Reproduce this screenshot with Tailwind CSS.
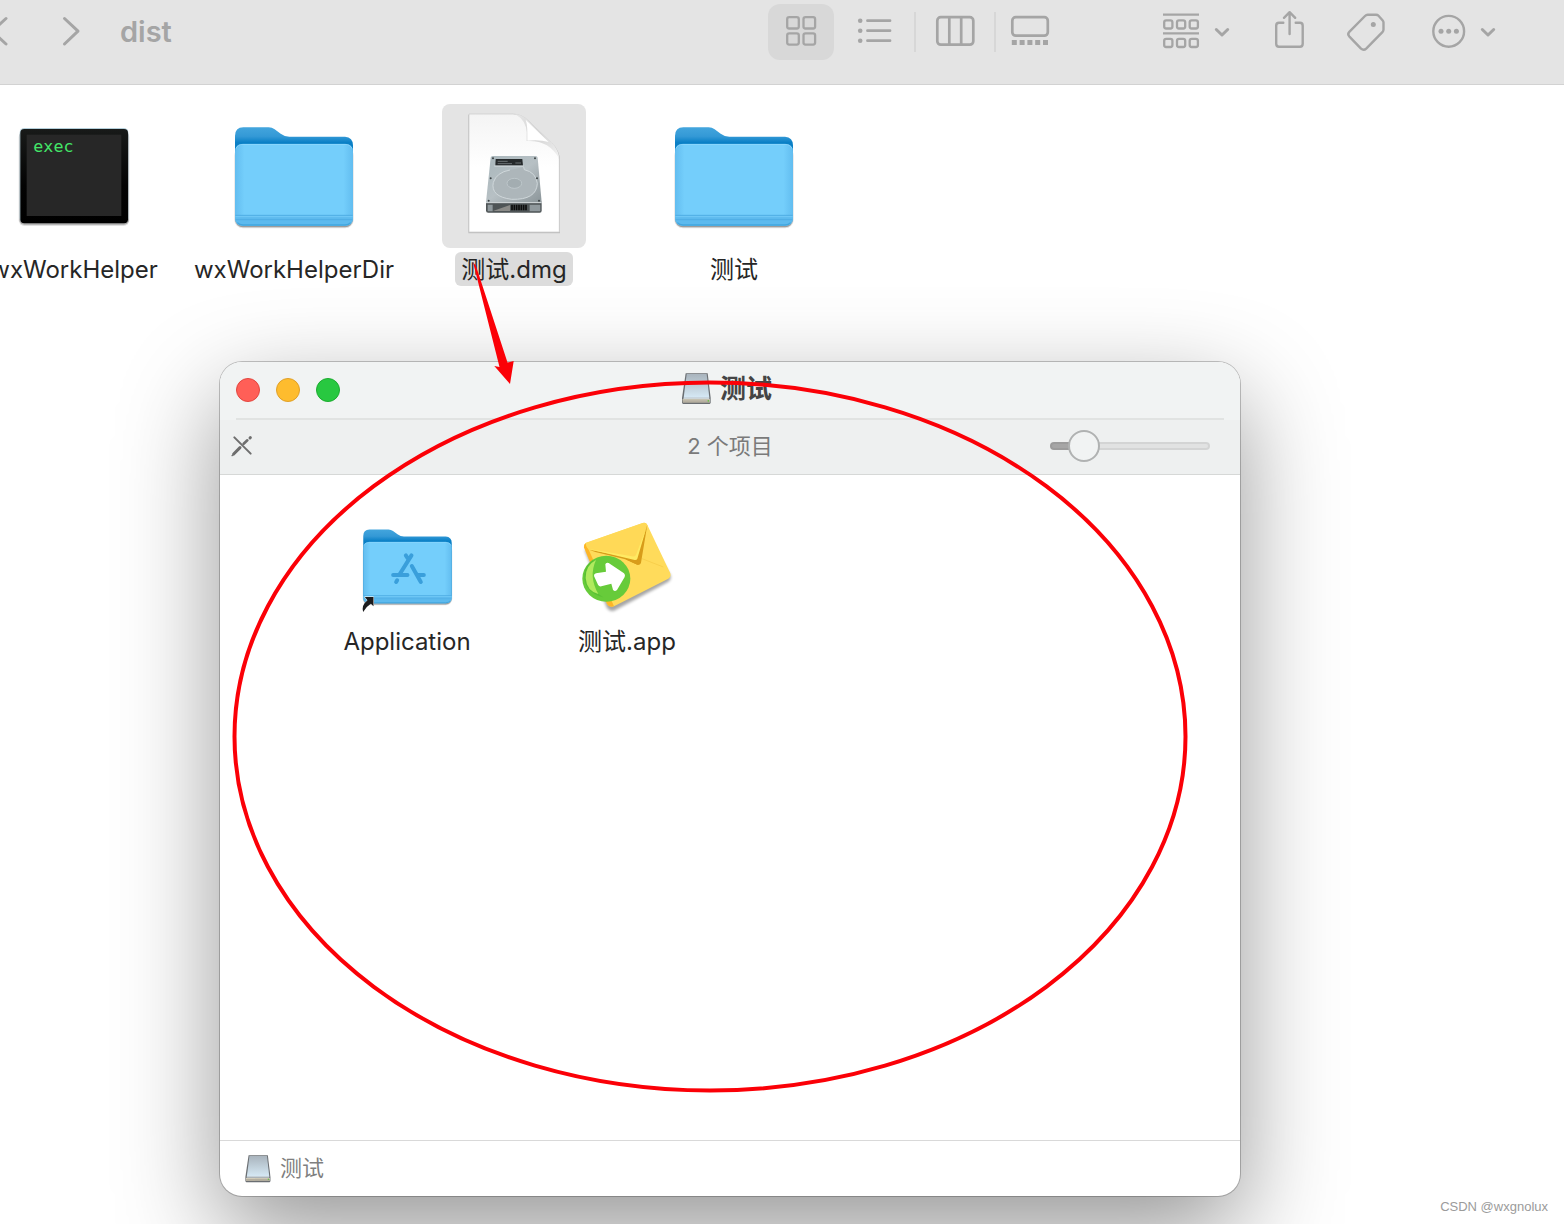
<!DOCTYPE html>
<html lang="zh-CN">
<head>
<meta charset="utf-8">
<meta name="viewport" content="width=device-width, initial-scale=1">
<title>dist</title>
<script src="https://cdn.jsdelivr.net/npm/@tailwindcss/browser@4"></script>
</head>
<body class="relative min-h-screen overflow-hidden bg-white font-['Inter','Noto_Sans_CJK_SC',sans-serif] text-[#262626]">

<!-- Shared artwork -->
<svg class="absolute size-0" aria-hidden="true">
  <defs>
    <linearGradient id="folderBack" x1="0" y1="0" x2="0" y2="1">
      <stop offset="0" stop-color="#43a5dd"/><stop offset=".1" stop-color="#3499d6"/><stop offset=".17" stop-color="#0a80c6"/><stop offset="1" stop-color="#0a80c6"/>
    </linearGradient>
    <linearGradient id="folderFront" x1="0" y1="0" x2="1" y2="0">
      <stop offset="0" stop-color="#62bdf0"/><stop offset=".08" stop-color="#74cefb"/><stop offset=".92" stop-color="#74cefb"/><stop offset="1" stop-color="#62bdf0"/>
    </linearGradient>
    <linearGradient id="diskTop" x1="0" y1="0" x2="0" y2="1">
      <stop offset="0" stop-color="#a9b4bd"/><stop offset="1" stop-color="#d6e9f5"/>
    </linearGradient>
  </defs>
  <symbol id="folder" viewBox="126 12 432 432">
    <rect x="163" y="142" width="358" height="243" rx="26" fill="#000" opacity=".12"/>
    <rect x="165" y="150" width="354" height="232" rx="24" fill="#000" opacity=".3"/>
    <path d="M165 108Q165 82 190 82H266Q276 82 284 88L302 101Q314 110 328 110H495Q519 112 519 136V350H165Z" fill="url(#folderBack)"/>
    <path d="M165 156Q165 132 189 132H495Q519 132 519 156V353Q519 377 495 377H189Q165 377 165 353Z" fill="url(#folderFront)"/>
    <path d="M168 146Q172 133 189 133H495Q512 133 516 146" fill="none" stroke="#9addff" stroke-width="2"/>
    <path d="M165 347H519V352Q519 377 495 377H189Q165 377 165 352Z" fill="#5dbaee"/>
    <path d="M166 346H518M167 359H517" stroke="#50aee4" stroke-width="3"/>
    <path d="M166 350H518" stroke="#73caf7" stroke-width="3"/>
    <path d="M172 368Q178 375 189 375H495Q506 375 512 368" fill="none" stroke="#43a6de" stroke-width="4"/>
  </symbol>
  <symbol id="disk" viewBox="66 52 90 96">
    <path d="M77 53H143L152 127V142L149 145H69L66 142V127Z" fill="#6a6e72"/>
    <path d="M80 55H140L148 126H71Z" fill="url(#diskTop)"/>
    <path d="M71 126H148V129H70Z" fill="#eef8fd"/>
    <path d="M68 131H150V141H68Z" fill="#b5afa0"/>
    <path d="M68 131H150V134H68Z" fill="#d2ccba"/>
    <rect x="143" y="133" width="4" height="5" fill="#6bc24a"/>
  </symbol>
  <symbol id="chevron" viewBox="0 0 16 44">
    <path d="M2.300 19.500L8 25L13.700 19.500" fill="none" stroke="currentColor" stroke-width="3" stroke-linecap="round" stroke-linejoin="round"/>
  </symbol>
</svg>

<header class="flex h-[85px] items-start border-b border-[#d2d2d2] bg-[#e4e4e4] pt-1 pr-17 text-[#a5a5a5]">
  <nav class="-ml-2.5 flex h-14 items-center gap-[52px]">
    <button aria-label="后退"><svg class="block h-11 w-5" viewBox="0 0 20 44" fill="none" stroke="currentColor" stroke-width="3" stroke-linecap="round" stroke-linejoin="round"><path d="M16 8.500L2 21.200L16 34"/></svg></button>
    <button aria-label="前进"><svg class="block h-11 w-5" viewBox="0 0 20 44" fill="none" stroke="currentColor" stroke-width="3" stroke-linecap="round" stroke-linejoin="round"><path d="M2.500 8.500L16 21.200L2.500 34"/></svg></button>
  </nav>
  <h1 class="ml-[38px] flex h-14 items-center text-[29px] font-semibold">dist</h1>

  <div class="ml-auto flex h-14 items-center gap-[7px]">
    <button aria-label="图标" class="flex h-14 w-[66px] items-center rounded-xl bg-[#d8d8d8]">
      <svg class="h-11 w-full" viewBox="0 0 66 44" fill="none" stroke="currentColor" stroke-width="2.300"><rect x="19.200" y="7.200" width="11.600" height="11.300" rx="2"/><rect x="35.500" y="7.200" width="11.600" height="11.300" rx="2"/><rect x="19.200" y="23.300" width="11.600" height="11.300" rx="2"/><rect x="35.500" y="23.300" width="11.600" height="11.300" rx="2"/></svg>
    </button>
    <button aria-label="列表" class="w-[66px]">
      <svg class="block h-11 w-full" viewBox="0 0 66 44" fill="currentColor"><circle cx="19.200" cy="10.700" r="2.300"/><circle cx="19.200" cy="20.700" r="2.300"/><circle cx="19.200" cy="30.700" r="2.300"/><path d="M26.500 10.700H49M26.500 20.700H49M26.500 30.700H49" stroke="currentColor" stroke-width="2.800" stroke-linecap="round"/></svg>
    </button>
    <span class="h-10 w-0.5 bg-[#d7d7d7]"></span>
    <button aria-label="分栏" class="w-16">
      <svg class="block h-11 w-full" viewBox="0 0 64 44" fill="none" stroke="currentColor" stroke-width="2.700"><rect x="14.300" y="7.200" width="36" height="27.500" rx="3.500"/><path d="M26.300 7V35M38.200 7V35"/></svg>
    </button>
    <span class="h-10 w-0.5 bg-[#d7d7d7]"></span>
    <button aria-label="画廊" class="w-[54px]">
      <svg class="block h-11 w-full" viewBox="0 0 54 44" fill="currentColor"><rect x="9.300" y="7.200" width="35.500" height="18.500" rx="3.500" fill="none" stroke="currentColor" stroke-width="2.700"/><rect x="8.800" y="30" width="5" height="5"/><rect x="16.600" y="30" width="5" height="5"/><rect x="24.400" y="30" width="5" height="5"/><rect x="32.200" y="30" width="5" height="5"/><rect x="40" y="30" width="5" height="5"/></svg>
    </button>
  </div>

  <div class="ml-[105px] flex h-14 items-center gap-11">
    <button aria-label="分组" class="flex items-center gap-3.5">
      <svg class="h-11 w-[38px]" viewBox="0 0 38 44" fill="none" stroke="currentColor" stroke-width="2.300"><path d="M1 4.700H37M1 23.400H37"/><rect x="2.200" y="10.300" width="8.200" height="8.200" rx="2"/><rect x="15" y="10.300" width="8.200" height="8.200" rx="2"/><rect x="27.700" y="10.300" width="8.200" height="8.200" rx="2"/><rect x="2.200" y="28.800" width="8.200" height="8.200" rx="2"/><rect x="15" y="28.800" width="8.200" height="8.200" rx="2"/><rect x="27.700" y="28.800" width="8.200" height="8.200" rx="2"/></svg>
      <svg class="h-11 w-4"><use href="#chevron"/></svg>
    </button>
    <button aria-label="共享">
      <svg class="block h-11 w-[30px]" viewBox="0 0 30 44" fill="none" stroke="currentColor" stroke-width="2.400" stroke-linecap="round" stroke-linejoin="round"><path d="M9.300 12.800H5Q2.200 12.800 2.200 15.800V33.800Q2.200 36.800 5 36.800H26Q28.700 36.800 28.700 33.800V15.800Q28.700 12.800 26 12.800H21.700M15.600 24V2.500M10 7.800L15.600 2.200L21.200 7.800"/></svg>
    </button>
    <button aria-label="标签">
      <svg class="block h-11 w-10 overflow-visible" viewBox="0 0 40 44" fill="none" stroke="currentColor" stroke-width="2.400" stroke-linejoin="round"><path d="M19.700 4.700H28Q29.500 4.700 30.500 5.800L34.500 10.200Q35.500 11.300 35.500 12.500V19.500Q35.500 21 34.400 22.200L18.200 38.700Q15.700 41 13 38.700L1.200 26.300Q-.8 24 1.300 21.900L17 6Q18.300 4.700 19.700 4.700Z"/><circle cx="25.300" cy="14.400" r="2.500" fill="currentColor" stroke="none"/></svg>
    </button>
    <button aria-label="更多" class="flex items-center gap-3.5">
      <svg class="h-11 w-[34px]" viewBox="0 0 34 44" fill="currentColor"><circle cx="16.700" cy="21.300" r="15.400" fill="none" stroke="currentColor" stroke-width="2.400"/><circle cx="9" cy="21.300" r="2.500"/><circle cx="16.700" cy="21.300" r="2.500"/><circle cx="24.400" cy="21.300" r="2.500"/></svg>
      <svg class="h-11 w-4"><use href="#chevron"/></svg>
    </button>
  </div>
</header>

<main>
  <ul class="-ml-9 flex pt-[19px] text-2xl">
    <li class="flex w-[220px] shrink-0 flex-col items-center gap-1">
      <svg class="size-36" viewBox="6 12 432 432">
        <defs><linearGradient id="bezel" x1="0" y1="0" x2="0" y2="1"><stop offset="0" stop-color="#181a19"/><stop offset=".6" stop-color="#030303"/><stop offset="1" stop-color="#000"/></linearGradient></defs>
        <rect x="56" y="94" width="332" height="284" rx="17" fill="#000" opacity=".12"/>
        <rect x="58" y="92" width="329" height="282" rx="15" fill="#000" opacity=".25"/>
        <rect x="59" y="84" width="326" height="284" rx="14" fill="#b4cfda"/>
        <rect x="61" y="87" width="323" height="283" rx="12" fill="url(#bezel)"/>
        <rect x="80" y="104" width="284" height="244" fill="#272727"/>
        <text x="100" y="157" font-family="DejaVu Sans Mono, monospace" font-size="50" fill="#43e668">exec</text>
      </svg>
      <span class="rounded-md px-1.5 pt-0.5 leading-8">wxWorkHelper</span>
    </li>
    <li class="flex w-[220px] shrink-0 flex-col items-center gap-1">
      <svg class="size-36"><use href="#folder"/></svg>
      <span class="rounded-md px-1.5 pt-0.5 leading-8">wxWorkHelperDir</span>
    </li>
    <li class="flex w-[220px] shrink-0 flex-col items-center gap-1">
      <svg class="size-36 rounded-lg bg-[#e4e4e4]" viewBox="36 27 432 432">
        <defs>
          <linearGradient id="paper" x1="0" y1="0" x2="0" y2="1"><stop offset="0" stop-color="#f4f4f4"/><stop offset=".45" stop-color="#fff"/></linearGradient>
          <linearGradient id="fold" x1="0" y1="0" x2="1" y2="1"><stop offset="0" stop-color="#e6e6e6"/><stop offset=".5" stop-color="#d4d4d4"/><stop offset="1" stop-color="#f2f2f2"/></linearGradient>
          <linearGradient id="metal" x1="0" y1="0" x2="1" y2="1"><stop offset="0" stop-color="#a9b7bc"/><stop offset=".5" stop-color="#b7c0c4"/><stop offset="1" stop-color="#8b9599"/></linearGradient>
        </defs>
        <path d="M115 59H250Q280 60 300 82L365 146Q390 168 390 198V415H115Z" fill="#000" opacity=".16"/>
        <path d="M117 57H248Q277 58 298 80L365 144Q388 167 388 195V411H117Z" fill="url(#paper)" stroke="#c8c8c8" stroke-width="2"/>
        <path d="M256 58Q288 76 290 112V138Q356 134 387 190Q384 162 365 144L298 80Q280 61 256 58Z" fill="url(#fold)"/>
        <path d="M287 74Q292 88 292 112V137Q330 133 356 141Z" fill="#fff"/>
        <path d="M168 320H335V347Q335 353 329 353H175Q168 353 168 347Z" fill="#4e5456"/>
        <path d="M188 183H317Q322 183 323 188L335 322H168L182 188Q183 183 188 183Z" fill="url(#metal)"/>
        <path d="M168 323H335" stroke="#dfe5e8" stroke-width="3"/>
        <path d="M173 329H188V349H173ZM299 329H331V349H299Z" fill="#90999d"/>
        <path d="M189 348L240 330V348Z" fill="#8b8b88"/>
        <path d="M246 329V346M253 329V346M260 329V346M267 329V346M274 329V346M281 329V346M288 329V346" stroke="#0c0c0c" stroke-width="5"/>
        <path d="M240 225Q200 232 190 262Q181 305 245 313Q320 315 322 265Q318 232 283 224L281 216" fill="#adb6ba" stroke="#cfd7da" stroke-width="3"/>
        <path d="M197 192H277L279 212H196Z" fill="#262a2c"/>
        <path d="M203 199H233M203 206H246M256 204H273" stroke="#8e9698" stroke-width="2"/>
        <path d="M193 213H281" stroke="#d9e0e3" stroke-width="3"/>
        <ellipse cx="253" cy="265" rx="22" ry="15" fill="#a3adb1" stroke="#c9d1d4" stroke-width="2"/>
        <g fill="#3a4143"><circle cx="189" cy="190" r="3"/><circle cx="315" cy="190" r="3"/><circle cx="182" cy="250" r="3"/><circle cx="321" cy="250" r="3"/><circle cx="176" cy="317" r="3"/><circle cx="327" cy="317" r="3"/></g>
      </svg>
      <span class="rounded-md bg-[#dcdcdc] px-1.5 pt-0.5 leading-8">测试.dmg</span>
    </li>
    <li class="flex w-[220px] shrink-0 flex-col items-center gap-1">
      <svg class="size-36"><use href="#folder"/></svg>
      <span class="rounded-md px-1.5 pt-0.5 leading-8">测试</span>
    </li>
  </ul>
</main>

<!-- Mounted volume window -->
<section aria-label="测试" class="absolute top-[362px] left-[220px] flex w-[1020px] flex-col overflow-hidden rounded-[22px] bg-white shadow-[0_0_0_1px_rgb(0_0_0/0.22),0_36px_100px_rgb(0_0_0/0.42)]">
  <div class="border-b border-[#d6d8d7] bg-[#eef0f0]">
    <div class="bg-[#f1f3f3] px-4">
      <div class="grid h-[58px] grid-cols-[1fr_auto_1fr] items-center border-b-2 border-[#e1e3e2]">
        <div class="flex gap-4">
          <button aria-label="关闭" class="size-6 rounded-full border border-[#e2463f] bg-[#ff5f57]"></button>
          <button aria-label="最小化" class="size-6 rounded-full border border-[#e0a028] bg-[#febc2e]"></button>
          <button aria-label="缩放" class="size-6 rounded-full border border-[#1cac2f] bg-[#28c840]"></button>
        </div>
        <h2 class="flex items-center gap-2 pr-1.5 pb-0.5 text-[26px] leading-[34px] font-bold text-[#454545]">
          <svg class="h-8 w-[30px]"><use href="#disk"/></svg>测试
        </h2>
      </div>
    </div>
    <div class="grid h-[54px] grid-cols-[1fr_auto_1fr] items-center px-[30px] pb-0.5">
      <svg class="-ml-5 size-6" viewBox="0 0 72 72" fill="none" stroke="#6e6e6e" stroke-linecap="round"><path d="M13 10L62 59" stroke-width="6"/><path d="M11 60L30 41" stroke-width="9"/><path d="M6 65L12 60" stroke-width="4"/><path d="M41 29L52 19" stroke-width="8"/><path d="M60 12L61 11" stroke-width="9"/></svg>
      <p class="text-[22px] leading-8 text-[#7a7a7a]">2 个项目</p>
      <input type="range" aria-label="图标大小" min="0" max="100" value="14" class="h-8 w-40 appearance-none justify-self-end bg-transparent [&::-webkit-slider-runnable-track]:h-2 [&::-webkit-slider-runnable-track]:rounded-full [&::-webkit-slider-runnable-track]:bg-[linear-gradient(to_right,#a6a6a6_30px,#e1e2e2_30px)] [&::-webkit-slider-runnable-track]:shadow-[inset_0_0_0_2px_rgb(0_0_0/0.06)] [&::-webkit-slider-thumb]:-mt-3 [&::-webkit-slider-thumb]:size-8 [&::-webkit-slider-thumb]:appearance-none [&::-webkit-slider-thumb]:rounded-full [&::-webkit-slider-thumb]:border-2 [&::-webkit-slider-thumb]:border-[#b0b2b2] [&::-webkit-slider-thumb]:bg-[#f1f3f3]">
    </div>
  </div>

  <ul class="flex min-h-[665px] items-start pt-[37px] pl-[77px] text-2xl">
    <li class="flex w-[220px] flex-col items-center gap-1">
      <svg class="size-[108px]" viewBox="124 12 432 432">
        <use href="#folder" x="126" y="12" width="432" height="432"/>
        <g transform="translate(34 4) scale(1.333)">
          <path d="M226 136L233 147M243 136L208 192M188 195H231M260 195H280M244 168L271 216M200 211L197 216" fill="none" stroke="#3a9fdb" stroke-width="12" stroke-linecap="round" stroke-linejoin="round"/>
          <path d="M103 261H129V289L121 281Q106 290 98 306Q92 286 111 271Z" fill="#1c1c1e" stroke="#fff" stroke-width="3" stroke-linejoin="round" paint-order="stroke"/>
        </g>
      </svg>
      <span class="rounded-md px-1.5 pt-0.5 leading-8">Application</span>
    </li>
    <li class="flex w-[220px] flex-col items-center gap-1">
      <svg class="size-[108px]" viewBox="69 6 324 324">
        <path class="blur-[4px]" d="M104 120L280 60L362 198Q364 210 354 216L192 302Q178 306 170 292Z" fill="#000" opacity=".35"/>
        <path d="M102 112Q100 102 110 98L278 39Q288 36 292 45L361 190Q364 201 355 206L192 289Q178 294 171 282Z" fill="#ffdb5b"/>
        <path d="M102 112Q101 104 107 99L192 289Q178 294 171 282Z" fill="#fdb528"/>
        <path d="M107 99Q109 98 112 97L278 39Q288 36 292 45L268 160L125 122Q108 118 107 99Z" fill="#ffd957"/>
        <path d="M292 44L273 158Q271 166 262 164L226 148L258 148Z" fill="#d89c1a"/>
        <path d="M118 119L136 126L226 148L262 164Q268 166 272 158L258 146Z" fill="#d89c1a"/>
        <path d="M112 116L246 139Q254 141 258 135L290 50L262 146Q260 151 254 150Z" fill="#ffea63"/>
        <path d="M276 146L340 171" stroke="#f5c944" stroke-width="2"/>
        <ellipse cx="169" cy="206" rx="72" ry="69" fill="#67cb3a"/>
        <path d="M106 178Q97 210 112 232Q130 256 160 262Q118 238 116 206Q115 180 132 150Q112 160 106 178Z" fill="#4bb82d" opacity=".5"/>
        <path d="M138 150Q106 166 107 204Q110 243 145 252Q115 200 138 150Z" fill="#b0ea5e"/>
        <path d="M138 190L168 185L166 163Q168 156 176 159L222 190Q227 195 224 201L201 240Q194 246 189 239L184 221L154 229Q147 230 144 224L132 198Q131 192 138 190Z" fill="#fff"/>
      </svg>
      <span class="rounded-md px-1.5 pt-0.5 leading-8">测试.app</span>
    </li>
  </ul>

  <footer class="flex h-14 items-center gap-2 border-t border-[#d9d9d9] px-[25px] text-[22px] text-[#7f7f7f]">
    <svg class="h-7 w-[27px]"><use href="#disk"/></svg>测试
  </footer>
</section>

<!-- Red annotation marks -->
<svg class="pointer-events-none absolute top-[250px] left-[220px] h-[850px] w-[980px]" viewBox="220 250 980 850" aria-hidden="true">
  <ellipse cx="710" cy="736.500" rx="475.500" ry="354" fill="none" stroke="#fb0007" stroke-width="4"/>
  <path d="M473 262L476 266L507.500 362.500L513.700 361L510 384L494.300 366L499.500 367Z" fill="#fb0007"/>
</svg>

<p class="absolute right-4 bottom-[7px] font-['Liberation_Sans',sans-serif] text-[13px] leading-5 text-[#9b9b9b]">CSDN @wxgnolux</p>
</body>
</html>
